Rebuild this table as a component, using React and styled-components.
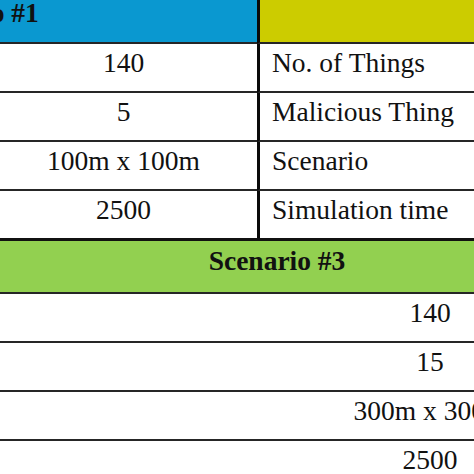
import React from "react";
import styled, { createGlobalStyle } from "styled-components";

const Global = createGlobalStyle`
  html, body { margin: 0; padding: 0; background: #fff; overflow: hidden; }
  * { box-sizing: border-box; }
`;

const Viewport = styled.div`
  width: 474px;
  height: 474px;
  overflow: hidden;
  background: #fff;
  font-family: "Liberation Serif", "Times New Roman", serif;
  color: #111;
`;

const Sheet = styled.div`
  margin-left: -316px;
  width: 1186px;
`;

const TopTable = styled.div`
  display: grid;
  grid-template-columns: 306px 267px 213px 400px;
`;

const BottomTable = styled.div`
  display: grid;
  grid-template-columns: 306px 880px;
  border-top: 3px solid #111;
`;

const HeaderCell = styled.div`
  grid-column: span ${(p) => p.$span || 1};
  background: ${(p) => p.$bg};
  height: ${(p) => p.$h}px;
  padding-top: ${(p) => p.$pt}px;
  border-bottom: 2px solid #262626;
  border-left: ${(p) => (p.$divider ? "3px solid #0a0a0a" : "none")};
  font-weight: bold;
  font-size: 27.5px;
  line-height: ${(p) => p.$lh}px;
  text-align: center;
  white-space: nowrap;
`;

const Cell = styled.div`
  height: ${(p) => (p.$last ? 47 : 49)}px;
  border-bottom: ${(p) => (p.$last ? "none" : "2px solid #262626")};
  border-left: ${(p) => (p.$divider ? "3px solid #0a0a0a" : "none")};
  padding: 4px 0 0 ${(p) => (p.$align === "left" ? "12px" : "0")};
  font-size: 27.5px;
  line-height: 30px;
  text-align: ${(p) => p.$align || "center"};
  white-space: nowrap;
  overflow: hidden;
`;

const rows = [
  { label: "No. of Things", s1: "140", s2: "140", s3: "140" },
  { label: "Malicious Thing", s1: "5", s2: "10", s3: "15" },
  { label: "Scenario", s1: "100m x 100m", s2: "200m x 200m", s3: "300m x 300m" },
  { label: "Simulation time", s1: "2500", s2: "2500", s3: "2500" },
];

export default function App() {
  return (
    <>
      <Global />
      <Viewport>
        <Sheet>
          <TopTable>
            <HeaderCell $span={2} $bg="#0a98d0" $h={44} $pt={0} $lh={26}>
              Scenario #1
            </HeaderCell>
            <HeaderCell $span={2} $bg="#cccc00" $h={44} $pt={0} $lh={26} $divider>
              Scenario #2
            </HeaderCell>
            {rows.map((r, i) => {
              const last = i === rows.length - 1;
              return (
                <React.Fragment key={r.label}>
                  <Cell $align="left" $last={last}>{r.label}</Cell>
                  <Cell $last={last}>{r.s1}</Cell>
                  <Cell $align="left" $divider $last={last}>{r.label}</Cell>
                  <Cell $last={last}>{r.s2}</Cell>
                </React.Fragment>
              );
            })}
          </TopTable>
          <BottomTable>
            <HeaderCell $span={2} $bg="#92d050" $h={53} $pt={5} $lh={30}>
              Scenario #3
            </HeaderCell>
            {rows.map((r) => (
              <React.Fragment key={r.label}>
                <Cell $align="left">{r.label}</Cell>
                <Cell>{r.s3}</Cell>
              </React.Fragment>
            ))}
          </BottomTable>
        </Sheet>
      </Viewport>
    </>
  );
}
